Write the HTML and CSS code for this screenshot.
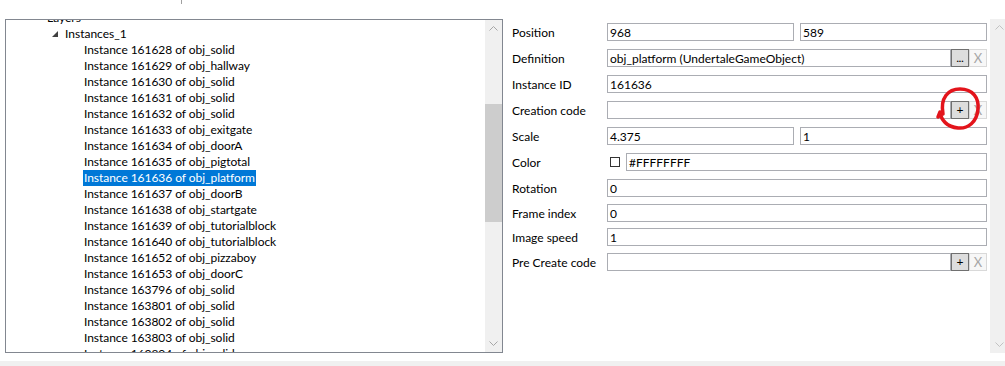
FILE: index.html
```html
<!DOCTYPE html>
<html>
<head>
<meta charset="utf-8">
<link rel="stylesheet" href="styles.css">
</head>
<body>
<div class="topbar"><span class="tick"></span></div>
<div class="main">
  <div class="tree">
    <div class="tree-list">
      <div class="tree-inner">
        <div class="node node-layers">Layers</div>
        <div class="node node-group"><svg class="expander" width="6" height="6" viewBox="0 0 6 6"><path d="M6 0 L6 6 L0 6 Z" fill="#404040"/></svg><span>Instances_1</span></div>
        <div class="node node-item"><span>Instance 161628 of obj_solid</span></div>
        <div class="node node-item"><span>Instance 161629 of obj_hallway</span></div>
        <div class="node node-item"><span>Instance 161630 of obj_solid</span></div>
        <div class="node node-item"><span>Instance 161631 of obj_solid</span></div>
        <div class="node node-item"><span>Instance 161632 of obj_solid</span></div>
        <div class="node node-item"><span>Instance 161633 of obj_exitgate</span></div>
        <div class="node node-item"><span>Instance 161634 of obj_doorA</span></div>
        <div class="node node-item"><span>Instance 161635 of obj_pigtotal</span></div>
        <div class="node node-item selected"><span>Instance 161636 of obj_platform</span></div>
        <div class="node node-item"><span>Instance 161637 of obj_doorB</span></div>
        <div class="node node-item"><span>Instance 161638 of obj_startgate</span></div>
        <div class="node node-item"><span>Instance 161639 of obj_tutorialblock</span></div>
        <div class="node node-item"><span>Instance 161640 of obj_tutorialblock</span></div>
        <div class="node node-item"><span>Instance 161652 of obj_pizzaboy</span></div>
        <div class="node node-item"><span>Instance 161653 of obj_doorC</span></div>
        <div class="node node-item"><span>Instance 163796 of obj_solid</span></div>
        <div class="node node-item"><span>Instance 163801 of obj_solid</span></div>
        <div class="node node-item"><span>Instance 163802 of obj_solid</span></div>
        <div class="node node-item"><span>Instance 163803 of obj_solid</span></div>
        <div class="node node-item"><span>Instance 163804 of obj_solid</span></div>
      </div>
    </div>
    <div class="vscroll">
      <div class="sb-btn"><svg width="9" height="5" viewBox="0 0 9 5"><path d="M0.5 4.5 L4.5 0.5 L8.5 4.5" fill="none" stroke="#a6a6a6"/></svg></div>
      <div class="sb-track"><div class="sb-thumb"></div></div>
      <div class="sb-btn"><svg width="9" height="5" viewBox="0 0 9 5"><path d="M0.5 0.5 L4.5 4.5 L8.5 0.5" fill="none" stroke="#a6a6a6"/></svg></div>
    </div>
  </div>
  <div class="props">
    <div class="form">
      <div class="label">Position</div>
      <div class="field pair"><div class="tb">968</div><div class="tb">589</div></div>

      <div class="label">Definition</div>
      <div class="field"><div class="tb grow">obj_platform (UndertaleGameObject)</div><div class="btn btn-dots">...</div><div class="btn btn-x">X</div></div>

      <div class="label">Instance ID</div>
      <div class="field"><div class="tb grow">161636</div></div>

      <div class="label">Creation code</div>
      <div class="field"><div class="tb grow"></div><div class="btn btn-plus">+</div><div class="btn btn-x">X</div></div>

      <div class="label">Scale</div>
      <div class="field pair"><div class="tb">4.375</div><div class="tb">1</div></div>

      <div class="label">Color</div>
      <div class="field color-field"><span class="checkbox"></span><div class="tb grow">#FFFFFFFF</div></div>

      <div class="label">Rotation</div>
      <div class="field"><div class="tb grow">0</div></div>

      <div class="label">Frame index</div>
      <div class="field"><div class="tb grow">0</div></div>

      <div class="label">Image speed</div>
      <div class="field"><div class="tb grow">1</div></div>

      <div class="label">Pre Create code</div>
      <div class="field"><div class="tb grow"></div><div class="btn btn-plus">+</div><div class="btn btn-x">X</div></div>
    </div>
    <div class="vscroll vscroll-right">
      <div class="sb-btn"><svg width="9" height="5" viewBox="0 0 9 5"><path d="M0.5 4.5 L4.5 0.5 L8.5 4.5" fill="none" stroke="#c2c2c2"/></svg></div>
      <div class="sb-track"></div>
      <div class="sb-btn"><svg width="9" height="5" viewBox="0 0 9 5"><path d="M0.5 0.5 L4.5 4.5 L8.5 0.5" fill="none" stroke="#c2c2c2"/></svg></div>
    </div>
  </div>
</div>
<div class="bottom-gap"></div>
<div class="statusstrip"></div>
<svg class="annotation" width="48" height="46" viewBox="0 0 48 46"><path d="M8 28 C 5 12, 13 3, 25 3 C 38 3, 44 12, 43 23 C 42 36, 33 43, 23 42 C 12 41, 6 34, 5 26 L 3 31" fill="none" stroke="#e3141b" stroke-width="3.5" stroke-linecap="round" stroke-linejoin="round"/></svg>
</body>
</html>
```

FILE: styles.css
```css
* { box-sizing: border-box; }
html, body { margin: 0; padding: 0; }
body {
  position: relative;
  width: 1005px;
  height: 366px;
  overflow: hidden;
  background: #fff;
  font-family: Lato, "Noto Sans", sans-serif;
  font-size: 12px;
  color: #000;
}
.topbar { height: 19px; }
.tick { display: block; margin-left: 181px; width: 1px; height: 4px; background: #a0a0a0; }

.main { display: flex; height: 334px; }

.tree {
  margin-left: 5px;
  width: 498px;
  border: 1px solid #828790;
  display: flex;
}
.tree-list { flex: 1; overflow: hidden; }
.tree-inner { margin-top: -10px; }
.node { height: 16px; line-height: 16px; white-space: nowrap; }
.node-layers { padding-left: 41px; }
.node-group { padding-left: 46px; display: flex; align-items: center; }
.expander { margin-right: 7px; flex: none; }
.node-item { padding-left: 77px; }
.node-item span { display: inline-block; height: 16px; padding: 0 1px; letter-spacing: -0.05px; }
.node-item.selected span { background: #0078d7; color: #fff; }

.vscroll { width: 17px; background: #f0f0f0; display: flex; flex-direction: column; flex: none; }
.sb-btn { height: 17px; display: flex; align-items: center; justify-content: center; }
.sb-track { flex: 1; }
.sb-thumb { margin-top: 67px; height: 118px; background: #cdcdcd; }
.vscroll-right { width: 15px; }
.vscroll-right .sb-btn { justify-content: flex-start; padding-left: 5px; }

.props { width: 502px; display: flex; }
.form {
  flex: 1;
  padding: 4px 3px 0 9px;
  display: grid;
  grid-template-columns: 95px 1fr;
  grid-template-rows: repeat(6, 26px) 25px 24px 25px 18px;
  align-content: start;
  align-items: start;
}
.label { height: 18px; line-height: 19px; white-space: nowrap; }
.field { display: flex; height: 18px; }
.pair { gap: 6px; }
.pair .tb { flex: 1; }
.tb {
  height: 18px;
  border: 1px solid #abadb3;
  padding: 0 2px;
  line-height: 17px;
  background: #fff;
  white-space: nowrap;
  overflow: hidden;
}
.grow { flex: 1; }
.btn {
  width: 18px;
  height: 18px;
  flex: none;
  display: flex;
  align-items: center;
  justify-content: center;
  border: 1px solid #707070;
  background: #dddddd;
  font-size: 11px;
  line-height: 1;
}
.btn-dots { align-items: flex-end; padding-bottom: 3px; font-weight: bold; font-size: 10px; }
.btn-plus { font-size: 12px; }
.btn-x { border-color: #d9d9d9; background: #f7f7f7; color: #a6a6a6; font-size: 13px; }
.color-field { align-items: center; }
.checkbox {
  width: 10px;
  height: 10px;
  margin: 0 6px 0 3px;
  border: 1px solid #333;
  background: #fff;
  flex: none;
}

.bottom-gap { height: 8px; }
.statusstrip { height: 5px; background: #f0f0f0; }

.annotation { position: absolute; left: 935px; top: 86px; }
```
